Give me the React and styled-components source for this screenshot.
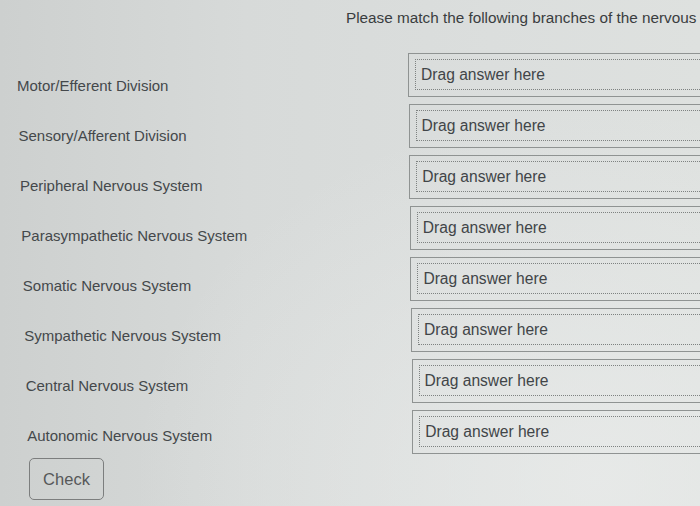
import React from "react";
import styled, { createGlobalStyle } from "styled-components";

const GlobalStyle = createGlobalStyle`
  html, body {
    margin: 0;
    padding: 0;
    width: 700px;
    height: 506px;
    overflow: hidden;
  }
  body {
    font-family: "Liberation Sans", Arial, sans-serif;
    background: linear-gradient(90deg, #cdd0cf 0%, #d7dad9 35%, #dbdedd 70%, #dee1df 100%);
  }
`;

const Page = styled.div`
  width: 700px;
  height: 506px;
  overflow: hidden;
  padding-top: 8px;
  box-sizing: border-box;
  background: radial-gradient(ellipse at 85% 95%, rgba(235, 237, 236, 0.7), rgba(235, 237, 236, 0) 55%);
`;

const Prompt = styled.div`
  margin-left: 346px;
  white-space: nowrap;
  font-size: 15.3px;
  line-height: 20px;
  color: #3a3d40;
`;

const Body = styled.div`
  display: grid;
  grid-template-columns: 408px 360px;
  margin-top: 25px;
`;

const Terms = styled.div`
  display: flex;
  flex-direction: column;
  padding-top: 7px;
`;

const Term = styled.div`
  height: 50px;
  display: flex;
  align-items: center;
  padding-left: ${(p) => p.$shift}px;
  font-size: 15px;
  color: #44484b;
  white-space: nowrap;
`;

const Slots = styled.div`
  display: flex;
  flex-direction: column;
  gap: 7px;
`;

const Slot = styled.div`
  height: 44px;
  box-sizing: border-box;
  margin-left: ${(p) => p.$shift}px;
  border: 1px solid #8f9392;
  border-right: none;
  padding: 5px 0 6px 6px;
  display: flex;
`;

const DropZone = styled.div`
  flex: 1;
  box-sizing: border-box;
  border: 1px dotted #7e8281;
  border-right: none;
  padding-left: 5px;
  display: flex;
  align-items: center;
  font-size: 15.6px;
  color: #414548;
  white-space: nowrap;
`;

const CheckButton = styled.button`
  align-self: flex-start;
  margin-top: -2px;
  margin-left: 29px;
  width: 75px;
  height: 42px;
  box-sizing: border-box;
  background: transparent;
  border: 1.5px solid #7c7e7e;
  border-radius: 5px;
  font-family: inherit;
  font-size: 16.5px;
  color: #565859;
  padding: 0;
`;

const terms = [
  "Motor/Efferent Division",
  "Sensory/Afferent Division",
  "Peripheral Nervous System",
  "Parasympathetic Nervous System",
  "Somatic Nervous System",
  "Sympathetic Nervous System",
  "Central Nervous System",
  "Autonomic Nervous System",
];

export default function App() {
  return (
    <>
      <GlobalStyle />
      <Page>
        <Prompt>Please match the following branches of the nervous</Prompt>
        <Body>
          <Terms>
            {terms.map((t, i) => (
              <Term key={t} $shift={17 + i * 1.45}>
                {t}
              </Term>
            ))}
            <CheckButton type="button">Check</CheckButton>
          </Terms>
          <Slots>
            {terms.map((t, i) => (
              <Slot key={t} $shift={i * 0.6}>
                <DropZone>Drag answer here</DropZone>
              </Slot>
            ))}
          </Slots>
        </Body>
      </Page>
    </>
  );
}
